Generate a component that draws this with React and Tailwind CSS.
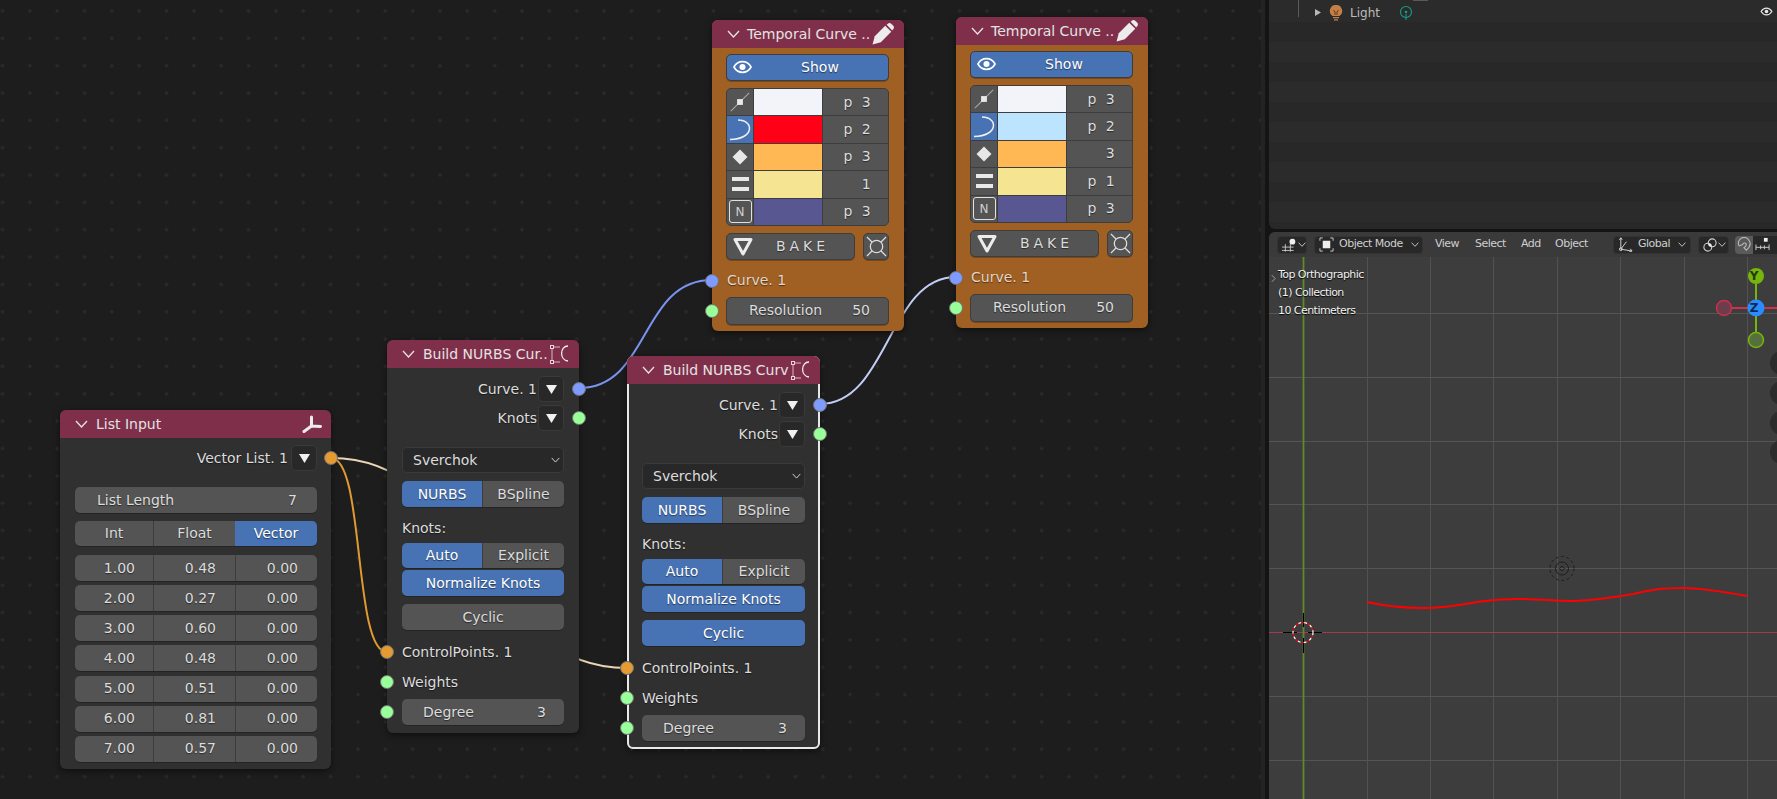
const txt = "[text-shadow:0_1px_1px_#00000080]";
const widget = "h-[26px] rounded-[5px] bg-[#545454] shadow-[0_1px_0_#00000040] text-[#dcdcdc] flex items-center " + txt;
const blue = "h-[26px] rounded-[5px] bg-[#4772b3] shadow-[0_1px_0_#00000040] text-white flex items-center justify-center " + txt;

const Chevron = ({ className = "w-[13px] h-[8px]" }) => (
  <svg viewBox="0 0 13 8" className={className} fill="none" stroke="#e4e4e4" strokeWidth="1.3">
    <path d="M1 1l5.5 6L12 1" />
  </svg>
);

const Socket = ({ color, side = "left" }) => (
  <span
    className={
      "absolute top-1/2 -translate-y-1/2 w-[14px] h-[14px] rounded-full border-[1.5px] border-[#707070] z-10 " +
      color +
      (side === "left" ? " -left-[7px]" : " -right-[7px]")
    }
  />
);

const Dropdown = () => (
  <span className="w-[26px] h-[26px] shrink-0 rounded-[5px] bg-[#282828] border border-[#3a3a3a] flex items-center justify-center">
    <svg viewBox="0 0 11 9" className="w-[11px] h-[9px]">
      <path d="M0 0h11L5.5 9z" fill="#f0f0f0" />
    </svg>
  </span>
);

const Header = ({ title, titleLeft, icon, bar = "h-[28px]" }) => (
  <div className={"relative flex items-center bg-[#802f4b] rounded-t-[6px] text-[#e2e2e2] overflow-hidden " + bar}>
    <span className="ml-[15px] shrink-0">
      <Chevron />
    </span>
    <span className={"whitespace-nowrap " + titleLeft}>{title}</span>
    {icon}
  </div>
);

const Output = ({ label, color, mt }) => (
  <div className={"relative flex items-center justify-end h-[26px] -mr-[15px] pr-[15px] " + mt}>
    <span className={"mr-px text-[#dcdcdc] " + txt}>{label}</span>
    <Dropdown />
    <Socket color={color} side="right" />
  </div>
);

const Input = ({ label, color, mt, children }) => (
  <div className={"relative flex items-center h-[26px] -ml-[15px] pl-[15px] " + mt}>
    {children || <span className={"text-[#dcdcdc] " + txt}>{label}</span>}
    <Socket color={color} />
  </div>
);

const CurveIcon = () => (
  <svg viewBox="0 0 20 20" className="absolute right-[10px] top-[4px] w-[20px] h-[20px]" fill="none">
    <path d="M3 3h8M3 18h8M3 3v15" stroke="#d9b9c4" strokeWidth="1" />
    <rect x="1.5" y="1.5" width="3" height="3" stroke="#e8d4da" fill="#802f4b" />
    <rect x="1.5" y="16.5" width="3" height="3" stroke="#e8d4da" fill="#802f4b" />
    <path d="M19 2c-8 0-9 14 0 15" stroke="#f0f0f0" strokeWidth="1.3" />
  </svg>
);

const BuildNode = ({ title, place, selected, cyclicOn }) => (
  <div className={"absolute w-[192px] rounded-[6px] bg-[#303030] shadow-[0_2px_6px_#00000080] " + place + (selected ? " w-[193px] outline-2 -outline-offset-2 outline-[#e8e8e8]" : "")}>
    <Header title={title} titleLeft="ml-[8px]" icon={<CurveIcon />} />
    <div className="pl-[15px] pr-[15px] pb-[8px]">
      <Output label="Curve. 1" color="bg-[#7f9bff]" mt="mt-[8px]" />
      <Output label="Knots" color="bg-[#99ff99]" mt="mt-[3px]" />
      <div className="mt-[16px] h-[26px] rounded-[5px] bg-[#282828] border border-[#3a3a3a] flex items-center justify-between pl-[10px] pr-[3px] text-[#dcdcdc]">
        Sverchok
        <Chevron className="w-[9px] h-[6px]" />
      </div>
      <div className="mt-[8px] flex">
        <div className={blue + " w-[80px] rounded-r-none"}>NURBS</div>
        <div className={widget + " flex-1 justify-center rounded-l-none border-l border-[#3d3d3d]"}>BSpline</div>
      </div>
      <div className={"mt-[8px] h-[26px] flex items-center text-[#dcdcdc] " + txt}>Knots:</div>
      <div className="mt-[2px] flex">
        <div className={blue + " h-[25px]! w-[80px] rounded-r-none"}>Auto</div>
        <div className={widget + " h-[25px]! flex-1 justify-center rounded-l-none border-l border-[#3d3d3d]"}>Explicit</div>
      </div>
      <div className={blue + " mt-[2px]"}>Normalize Knots</div>
      <div className={(cyclicOn ? blue : widget + " justify-center") + " mt-[8px]"}>Cyclic</div>
      <Input label="ControlPoints. 1" color="bg-[#e69a32]" mt="mt-[9px]" />
      <Input label="Weights" color="bg-[#99ff99]" mt="mt-[4px]" />
      <Input color="bg-[#99ff99]" mt="mt-[4px]">
        <div className={widget + " flex-1 justify-between pl-[21px] pr-[18px]"}>
          <span>Degree</span>
          <span>3</span>
        </div>
      </Input>
    </div>
  </div>
);

const listRows = [
  ["1.00", "0.48"],
  ["2.00", "0.27"],
  ["3.00", "0.60"],
  ["4.00", "0.48"],
  ["5.00", "0.51"],
  ["6.00", "0.81"],
  ["7.00", "0.57"],
];

const ListInput = () => (
  <div className="absolute left-[60px] top-[410px] w-[271px] rounded-[6px] bg-[#303030] shadow-[0_2px_6px_#00000080]">
    <Header
      title="List Input"
      titleLeft="ml-[8px]"
      icon={
        <svg viewBox="0 0 20 18" className="absolute right-[9px] top-[5px] w-[20px] h-[18px]" fill="none" stroke="#ececec" strokeWidth="3" strokeLinecap="round">
          <path d="M9.5 2v9M9.5 11l9 .5M9.5 11l-7.5 5.5" />
        </svg>
      }
    />
    <div className="pl-[15px] pr-[14px] pb-[7px]">
      <div className="relative flex items-center justify-end h-[26px] mt-[7px] -mr-[14px] pr-[14px]">
        <span className={"mr-[3px] text-[#dcdcdc] " + txt}>Vector List. 1</span>
        <Dropdown />
        <Socket color="bg-[#e69a32]" side="right" />
      </div>
      <div className={widget + " mt-[16px] justify-between pl-[22px] pr-[20px]"}>
        <span>List Length</span>
        <span>7</span>
      </div>
      <div className="mt-[8px] grid grid-cols-[78px_82px_82px] h-[25px]">
        <div className={widget + " h-[25px]! justify-center rounded-r-none"}>Int</div>
        <div className={widget + " h-[25px]! justify-center rounded-none border-l border-[#3d3d3d]"}>Float</div>
        <div className={blue + " h-[25px]! rounded-l-none"}>Vector</div>
      </div>
      <div className="mt-[9px] flex flex-col gap-[4.17px]">
        {listRows.map((r) => (
          <div key={r[0]} className="grid grid-cols-[78px_82px_82px]">
            <div className={widget + " justify-end pr-[18px] rounded-r-none"}>{r[0]}</div>
            <div className={widget + " justify-end pr-[19px] rounded-none border-l border-[#3d3d3d]"}>{r[1]}</div>
            <div className={widget + " justify-end pr-[19px] rounded-l-none border-l border-[#3d3d3d]"}>0.00</div>
          </div>
        ))}
      </div>
    </div>
  </div>
);

const Pencil = () => (
  <svg viewBox="0 0 20 20" className="absolute right-[10px] top-[3px] w-[22px] h-[22px]" fill="#ececec">
    <path d="M.5 19.5L2.5 12l9.5-9.5 5.5 5.5L8 17.5z" />
    <path d="M13.3 1.5L15 .3q1.4-.6 2.4.3l2 2q.9 1 .3 2.4l-1.3 1.8z" />
  </svg>
);

const iconVertex = (
  <svg viewBox="0 0 24 24" className="w-[20px] h-[20px]" fill="none">
    <path d="M1 23L23 1" stroke="#a8a8a8" strokeWidth="1.3" />
    <rect x="8.5" y="8.5" width="7" height="7" fill="#e8e8e8" />
  </svg>
);
const iconCurve = (
  <svg viewBox="0 0 24 24" className="w-[24px] h-[24px]" fill="none">
    <path d="M10 2c16 0 17 19-8 19.5" stroke="#f0f0f0" strokeWidth="1.5" />
  </svg>
);
const iconDiamond = (
  <svg viewBox="0 0 16 16" className="w-[16px] h-[16px]">
    <path d="M8 .5L15.5 8 8 15.5.5 8z" fill="#e8e8e8" />
  </svg>
);
const iconBars = (
  <span className="flex flex-col gap-[6px] w-[17px]">
    <span className="h-[4px] bg-[#e8e8e8]" />
    <span className="h-[4px] bg-[#e8e8e8]" />
  </span>
);
const iconN = (
  <span className="w-[23px] h-[23px] rounded-[3px] border border-[#e0e0e0] flex items-center justify-center text-[12px] text-[#d0d0d0]">N</span>
);

const TemporalNode = ({ place, bar, colors, values }) => {
  const icons = [iconVertex, iconCurve, iconDiamond, iconBars, iconN];
  return (
    <div className={"absolute w-[192px] rounded-[6px] bg-[#a06023] shadow-[0_2px_6px_#00000080] " + place}>
      <Header title="Temporal Curve .." titleLeft="ml-[7px]" bar={bar} icon={<Pencil />} />
      <div className="pl-[14px] pr-[15px] pb-[6px]">
        <div className={blue + " mt-[6px] h-[27px]! relative border border-[#3d3d3d]"}>
          <svg viewBox="0 0 20 14" className="absolute left-[6px] top-[5px] w-[19px] h-[14px]" fill="none">
            <path d="M1 7c4-7.500 14-7.500 18 0c-4 7.500-14 7.500-18 0z" stroke="#fff" strokeWidth="1.7" />
            <circle cx="10" cy="7" r="3.200" fill="#fff" />
          </svg>
          <span className="ml-[25px]">Show</span>
        </div>
        <div className="mt-[7px] rounded-[5px] overflow-hidden border border-[#3d3d3d] bg-[#3d3d3d] flex flex-col gap-px">
          {colors.map((c, i) => (
            <div key={i} className="grid grid-cols-[26px_68px_1fr] gap-px h-[26.4px]">
              <div className={"flex items-center justify-center " + (i === 1 ? "bg-[#4772b3]" : "bg-[#545454]")}>{icons[i]}</div>
              <div className={c} />
              <div className={"bg-[#545454] flex items-center justify-end gap-[9px] pr-[17px] text-[#dcdcdc] tracking-wide " + txt}>
                {values[i][0] && <span>p</span>}
                <span>{values[i][1]}</span>
              </div>
            </div>
          ))}
        </div>
        <div className="mt-[7px] flex justify-between">
          <div className={widget + " relative w-[129px] h-[27px]! justify-center border border-[#3d3d3d]"}>
            <svg viewBox="0 0 20 20" className="absolute left-[6px] top-[3px] w-[20px] h-[20px]" fill="none">
              <path d="M2 2.500h16L10 17z" stroke="#ececec" strokeWidth="3" strokeLinejoin="round" />
            </svg>
            <span className="ml-[24px] tracking-[4px]">BAKE</span>
          </div>
          <div className={widget + " w-[26px] h-[27px]! justify-center border border-[#3d3d3d]"}>
            <svg viewBox="0 0 22 22" className="w-[21px] h-[21px]" fill="none" stroke="#dedede" strokeWidth="1.3">
              <circle cx="11" cy="11" r="6.500" />
              <path d="M1 1l5.500 5.500M21 1l-5.500 5.500M1 21l5.500-5.500M21 21l-5.500-5.500" />
            </svg>
          </div>
        </div>
        <div className={"relative flex items-center h-[26px] mt-[8px] -ml-[14px] pl-[15px] text-[#e4d6c6] " + txt}>
          Curve. 1
          <Socket color="bg-[#7f9bff]" />
        </div>
        <div className="relative mt-[3px] -ml-[14px] pl-[14px]">
          <div className={widget + " h-[28px]! justify-between pl-[22px] pr-[18px] border border-[#3d3d3d]"}>
            <span>Resolution</span>
            <span>50</span>
          </div>
          <Socket color="bg-[#99ff99]" />
        </div>
      </div>
    </div>
  );
};

const Wires = () => (
  <svg className="absolute inset-0 w-full h-full" fill="none" strokeWidth="2">
    <path d="M331 458C365 458 353 652 387 652" stroke="#e09a30" />
    <path d="M331 458C479 458 479 668 627 668" stroke="#ead6b4" />
    <path d="M579 388C650 388 640 280 712 280" stroke="#7a93f0" />
    <path d="M820 404C888 404 888 277 956 277" stroke="#c3cdf5" />
  </svg>
);

const Outliner = () => (
  <div className="relative h-[229px] shrink-0 rounded-bl-[6px] overflow-hidden bg-[#282828]">
    <div className="flex items-center h-[22px] pt-[3px] bg-[#2b2b2b] relative">
      <span className="absolute left-[29px] top-0 h-[17px] w-px bg-[#5a5a5a]" />
      <span className="absolute left-[144px] top-0 h-px w-[15px] bg-[#5a5a5a]" />
      <svg viewBox="0 0 6 7" className="ml-[46px] w-[6px] h-[7px]">
        <path d="M0 0l6 3.500L0 7z" fill="#b8b8b8" />
      </svg>
      <svg viewBox="0 0 14 16" className="ml-[8px] w-[14px] h-[16px]">
        <path d="M7 0a6 6 0 0 1 3.500 11H3.500A6 6 0 0 1 7 0z" fill="#c58045" />
        <path d="M4 12h6v1.200H4zM5 14.200h4v1.200H5z" fill="#c58045" />
        <path d="M4.500 5l1.500 2v3M9.500 5L8 7v3" stroke="#3c2a1c" strokeWidth=".8" fill="none" />
      </svg>
      <span className="ml-[7px] text-[12px] text-[#bcbcbc]">Light</span>
      <svg viewBox="0 0 14 16" className="ml-[19px] w-[14px] h-[16px]" fill="none">
        <circle cx="7" cy="7" r="5.500" stroke="#12a08a" strokeWidth="1.100" />
        <circle cx="7" cy="7" r="1.300" fill="#12a08a" />
        <path d="M7 9v6" stroke="#12a08a" strokeWidth="1" />
      </svg>
      <svg viewBox="0 0 14 10" className="absolute right-[4px] top-[7px] w-[13px] h-[9px]" fill="none">
        <path d="M1 5c3-5 9-5 12 0c-3 5-9 5-12 0z" stroke="#e8e8e8" strokeWidth="1.300" />
        <circle cx="7" cy="5" r="2" fill="#e8e8e8" />
      </svg>
    </div>
    {[0, 1, 2, 3, 4, 5, 6, 7, 8, 9].map((i) => (
      <div key={i} className={"h-[20px] " + (i % 2 === 0 ? "bg-[#282828]" : "bg-[#2b2b2b]")} />
    ))}
  </div>
);

const Pill = ({ width, children }) => (
  <div className={"h-[18px] shrink-0 rounded-[4px] bg-[#282828] border border-[#333333] flex items-center " + width}>{children}</div>
);

const MenuItem = ({ width, label }) => <span className={"shrink-0 " + width}>{label}</span>;

const ViewHeader = () => (
  <div className="h-[25px] shrink-0 bg-[#3a3a3a] rounded-tl-[6px] flex items-center pl-[8px] text-[11px] tracking-[-0.5px] whitespace-nowrap text-[#cfcfcf] overflow-hidden">
    <Pill width="w-[30px]">
      <svg viewBox="0 0 18 16" className="ml-[4px] w-[15px] h-[14px]" fill="none" stroke="#d8d8d8" strokeWidth="1">
        <path d="M0 10.500h14M0 14.500h14M4 7v9M10 7v9" />
        <circle cx="12.500" cy="4" r="3.500" fill="#f0f0f0" stroke="none" />
      </svg>
      <Chevron className="ml-[1px] w-[8px] h-[5px]" />
    </Pill>
    <div className="ml-[7px]">
      <Pill width="w-[109px]">
        <svg viewBox="0 0 16 16" className="ml-[4px] w-[15px] h-[15px]" fill="none" stroke="#cfcfcf" strokeWidth="1">
          <path d="M1 4V1h3M12 1h3v3M15 12v3h-3M4 15H1v-3" />
          <rect x="4" y="4" width="8" height="8" fill="#eeeeee" stroke="none" />
        </svg>
        <span className="ml-[5px] flex-1">Object Mode</span>
        <Chevron className="mr-[3px] w-[8px] h-[5px]" />
      </Pill>
    </div>
    <div className="ml-[12px] flex">
      <MenuItem width="w-[40px]" label="View" />
      <MenuItem width="w-[46px]" label="Select" />
      <MenuItem width="w-[34px]" label="Add" />
      <MenuItem width="w-[58px]" label="Object" />
    </div>
    <Pill width="w-[78px]">
      <svg viewBox="0 0 16 16" className="ml-[4px] w-[15px] h-[15px]" fill="none" stroke="#d8d8d8" strokeWidth="1">
        <path d="M3 13L3 1M1.500 3L3 .8 4.500 3M3 13l12 2M13 12.500l2 2.300-2.800 .7M3 13L9 5" />
        <circle cx="3" cy="13" r="1.500" />
      </svg>
      <span className="ml-[5px] flex-1">Global</span>
      <Chevron className="mr-[4px] w-[8px] h-[5px]" />
    </Pill>
    <div className="ml-[7px]">
      <Pill width="w-[31px]">
        <svg viewBox="0 0 16 16" className="ml-[4px] w-[14px] h-[14px]" fill="none" stroke="#d8d8d8" strokeWidth="1.200">
          <circle cx="5.500" cy="10.500" r="4.500" />
          <circle cx="10.500" cy="5.500" r="4.500" />
          <circle cx="8" cy="8" r="1.500" fill="#f0f0f0" stroke="none" />
        </svg>
        <Chevron className="ml-[1px] w-[8px] h-[5px]" />
      </Pill>
    </div>
    <div className="ml-[6px] w-[18px] h-[18px] shrink-0 rounded-l-[4px] bg-[#5a5a5a] flex items-center justify-center">
      <svg viewBox="0 0 16 16" className="w-[15px] h-[15px]" fill="none" stroke="#b8b8b8" strokeWidth="1.200">
        <path d="M2 9a6 6 0 0 1 11-5c2 3 .5 7-3 10L7.500 11.500c2-1.500 3-3 2-4.500-1-1.200-3-.5-3.500 1L2.500 9.500z" />
      </svg>
    </div>
    <div className="w-[30px] h-[18px] shrink-0 bg-[#282828] flex items-center pl-[2px]">
      <svg viewBox="0 0 16 16" className="w-[15px] h-[15px]" fill="none" stroke="#d0d0d0" strokeWidth="1">
        <path d="M1 8v6M15 8v6M1 11h14M6 9v4M10 9v4" />
        <rect x="9.500" y="1" width="4" height="4" fill="#f0f0f0" stroke="none" />
      </svg>
    </div>
  </div>
);

const gridX = [1367, 1430, 1493, 1557, 1620, 1684, 1747];
const gridY = [313, 377, 441, 504, 568, 696, 760];

const Scene = () => (
  <svg viewBox="1269 257 508 542" className="absolute inset-0 w-full h-full" fill="none">
    {gridX.map((x) => (
      <path key={x} d={`M${x + 0.5} 257V799`} stroke="#525252" />
    ))}
    {gridY.map((y) => (
      <path key={y} d={`M1269 ${y + 0.5}H1777`} stroke="#555555" />
    ))}
    <path d="M1269 632.500H1777" stroke="#a33a4e" strokeWidth="1.200" />
    <path d="M1303.500 257V799" stroke="#5f8a2a" strokeWidth="1.800" />
    <path
      d="M1367 602C1385 606 1400 608 1423 608C1445 608 1460 605 1477 602C1490 600 1500 599 1520 599C1540 599 1555 601 1570 601C1590 601 1610 598 1633 594C1650 590 1660 588 1683 588C1700 588 1725 592 1747 596"
      stroke="#ff0000"
      strokeWidth="2"
    />
    <path d="M1283 632.500H1297M1308 632.500H1322M1303.500 613V627M1303.500 638V653" stroke="#000000" strokeWidth="1.200" />
    <circle cx="1303" cy="632.500" r="10" stroke="#ffffff" strokeWidth="1.200" strokeDasharray="3 3" />
    <circle cx="1303" cy="632.500" r="10" stroke="#ff0000" strokeWidth="1.200" strokeDasharray="3 3" strokeDashoffset="3" />
    <g stroke="#1e1e1e" strokeWidth="1">
      <circle cx="1562" cy="568.500" r="12" strokeDasharray="3 2.500" />
      <circle cx="1562" cy="568.500" r="6.500" />
      <path d="M1562 566l2.500 2.500-2.500 2.500-2.500-2.500z" />
    </g>
    <path d="M1756 284V332" stroke="#76b40e" strokeWidth="2" />
    <path d="M1732 308H1777" stroke="#d2304f" strokeWidth="2" />
    <circle cx="1724" cy="308" r="7.500" fill="#6e3d4b" stroke="#c9304e" strokeWidth="1.500" />
    <circle cx="1756" cy="340" r="7.500" fill="#55703c" stroke="#76b40e" strokeWidth="1.500" />
    <circle cx="1756" cy="276" r="8" fill="#76b40e" />
    <circle cx="1756" cy="308" r="8.500" fill="#2a8cff" />
    <circle cx="1782" cy="363" r="12" fill="#2c2c2c" />
    <circle cx="1782" cy="393" r="12" fill="#2c2c2c" />
    <circle cx="1782" cy="423" r="12" fill="#2c2c2c" />
    <circle cx="1782" cy="452" r="12" fill="#2c2c2c" />
  </svg>
);

const Viewport = () => (
  <div className="flex-1 mt-[3px] min-h-0 flex flex-col rounded-tl-[6px] bg-[#3d3d3d] overflow-hidden">
    <ViewHeader />
    <div className="relative flex-1">
      <Scene />
      <div className="absolute left-[9px] top-[9px] text-[11px] tracking-[-0.55px] leading-[18px] text-[#f2f2f2] [text-shadow:0_1px_1px_#000000]">
        <div>Top Orthographic</div>
        <div>(1) Collection</div>
        <div>10 Centimeters</div>
      </div>
      <svg viewBox="0 0 6 10" className="absolute left-[2px] top-[17px] w-[5px] h-[9px]" fill="none" stroke="#a0a0a0" strokeWidth="1.200">
        <path d="M1 1l4 4-4 4" />
      </svg>
      <span className="absolute left-[483px] top-[11px] w-[10px] text-[12px] leading-[16px] font-bold text-[#203a08] text-center -translate-x-[3px]">Y</span>
      <span className="absolute left-[483px] top-[43px] w-[10px] text-[12px] leading-[16px] font-bold text-[#0d2a55] text-center -translate-x-[3px]">Z</span>
    </div>
  </div>
);

export default function App() {
  return (
    <div className="flex w-[1777px] h-[799px] overflow-hidden bg-[#141414] font-['DejaVu_Sans',sans-serif] text-[14px]">
      <div className="relative w-[1261px] shrink-0 bg-[#1d1d1d] bg-[radial-gradient(circle,#2a2a2a_1.500px,transparent_1.700px)] bg-[size:27.350px_27.350px] bg-[position:-11.200px_-2.700px]">
        <Wires />
        <ListInput />
        <BuildNode title="Build NURBS Cur.." place="left-[387px] top-[340px]" />
        <BuildNode title="Build NURBS Curv" place="left-[627px] top-[356px]" selected cyclicOn />
        <TemporalNode
          place="left-[712px] top-[20px]"
          colors={["bg-[#f3f3fa]", "bg-[#ff0016]", "bg-[#ffb853]", "bg-[#f5e592]", "bg-[#585791]"]}
          values={[[true, 3], [true, 2], [true, 3], [false, 1], [true, 3]]}
        />
        <TemporalNode
          place="left-[956px] top-[17px]"
          colors={["bg-[#f3f3fa]", "bg-[#bde4ff]", "bg-[#ffb853]", "bg-[#f5e592]", "bg-[#585791]"]}
          values={[[true, 3], [true, 2], [false, 3], [true, 1], [true, 3]]}
        />
      </div>
      <div className="w-[4px] shrink-0 bg-[#232323]" />
      <div className="w-[4px] shrink-0 bg-[#141414]" />
      <div className="flex-1 min-w-0 flex flex-col">
        <Outliner />
        <Viewport />
      </div>
    </div>
  );
}
